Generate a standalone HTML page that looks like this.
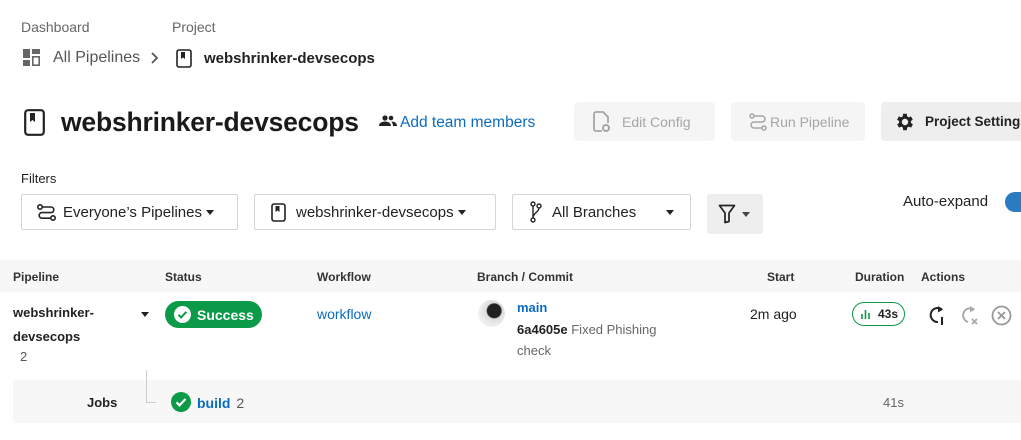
<!DOCTYPE html>
<html><head><meta charset="utf-8"><style>
body{margin:0;width:1021px;height:440px;overflow:hidden;background:#fff;font-family:"Liberation Sans",sans-serif;color:#222;position:relative}
.a{position:absolute;white-space:nowrap}
.btn{position:absolute;top:102px;height:39px;border-radius:4px;background:#f5f5f5;color:#a6a6a6;font-size:14px;display:flex;align-items:center}
.dd{position:absolute;top:194px;height:34px;border:1px solid #d6d6d6;border-radius:2px;font-size:15px;display:flex;align-items:center;color:#222}
.th{position:absolute;top:270px;font-size:12px;font-weight:bold;color:#333}
.caret{display:inline-block;width:0;height:0;border-left:4px solid transparent;border-right:4px solid transparent;border-top:5px solid #222}
.blue{color:#0b6bbf}
</style></head><body>
<div class="a" style="left:21px;top:19px;font-size:14px;color:#666">Dashboard</div>
<div class="a" style="left:172px;top:19px;font-size:14px;color:#666">Project</div>
<svg class="a" style="left:23px;top:49px" width="18" height="18" viewBox="0 0 18 18"><rect x="0" y="0" width="7" height="9" fill="#666"/><rect x="9" y="0" width="8" height="5" fill="#666"/><rect x="0" y="11" width="7" height="6" fill="#666"/><rect x="9.8" y="7.8" width="6.4" height="8.4" fill="none" stroke="#666" stroke-width="1.6"/></svg>
<div class="a" style="left:53px;top:49px;font-size:16px;color:#555">All Pipelines</div>
<svg class="a" style="left:150px;top:51px" width="10" height="14"><path d="M2 2l5 5-5 5" fill="none" stroke="#555" stroke-width="1.8"/></svg>
<svg class="a" style="left:176px;top:49px" width="16" height="19" viewBox="0 0 16 19"><rect x="1" y="1" width="14" height="17" rx="2" fill="none" stroke="#222" stroke-width="1.6"/><path d="M5 3v7l2-1.5 2 1.5V3z" fill="#222"/></svg>
<div class="a" style="left:204px;top:50px;font-size:15px;font-weight:bold">webshrinker-devsecops</div>

<svg class="a" style="left:24px;top:109px" width="21" height="27" viewBox="0 0 21 27"><rect x="1.2" y="1.2" width="18.6" height="24.6" rx="3" fill="none" stroke="#222" stroke-width="2.2"/><path d="M6 4v9l2.5-2 2.5 2V4z" fill="#222"/></svg>
<div class="a" style="left:61px;top:107px;font-size:26.5px;font-weight:bold;color:#1a1a1a;letter-spacing:-0.2px">webshrinker-devsecops</div>
<svg class="a" style="left:379px;top:115px" width="18" height="12" viewBox="0 0 18 12"><circle cx="6" cy="3" r="2.6" fill="#222"/><circle cx="12" cy="3" r="2.3" fill="#222"/><path d="M0 11c0-3 3-4.5 6-4.5s6 1.5 6 4.5z M12.5 6.5c3 0 5.5 1.5 5.5 4.5h-4c0-2-1-3.5-1.5-4.5z" fill="#222"/></svg>
<div class="a blue" style="left:400px;top:114px;font-size:15.5px">Add team members</div>

<div class="btn" style="left:574px;width:141px"><svg style="margin-left:19px" width="18" height="22" viewBox="0 0 18 22"><path d="M9 20H3a2 2 0 0 1-2-2V3a2 2 0 0 1 2-2h7l5 5v6" fill="none" stroke="#a6a6a6" stroke-width="1.8"/><circle cx="13" cy="17" r="3" fill="none" stroke="#a6a6a6" stroke-width="2"/></svg><span style="margin-left:11px">Edit Config</span></div>
<div class="btn" style="left:731px;width:134px"><svg style="margin-left:18px" width="18" height="18" viewBox="0 0 18 18"><circle cx="3" cy="3" r="2" fill="none" stroke="#a6a6a6" stroke-width="1.5"/><circle cx="15" cy="15" r="2" fill="none" stroke="#a6a6a6" stroke-width="1.5"/><path d="M5 3h8a3 3 0 0 1 0 6H5a3 3 0 0 0 0 6h8" fill="none" stroke="#a6a6a6" stroke-width="1.5"/></svg><span style="margin-left:3px">Run Pipeline</span></div>
<div class="btn" style="left:881px;width:160px;background:#eee;color:#222;font-weight:bold;font-size:13.5px"><svg style="margin-left:13px" width="22" height="22" viewBox="0 0 24 24"><path fill="#222" d="M19.4 13a7.5 7.5 0 0 0 0-2l2.1-1.6-2-3.5-2.5 1a7 7 0 0 0-1.7-1L15 3h-4l-.4 2.9a7 7 0 0 0-1.7 1l-2.5-1-2 3.5L6.6 11a7.5 7.5 0 0 0 0 2l-2.1 1.6 2 3.5 2.5-1a7 7 0 0 0 1.7 1L11 21h4l.4-2.9a7 7 0 0 0 1.7-1l2.5 1 2-3.5zM13 15.5a3.5 3.5 0 1 1 0-7 3.5 3.5 0 0 1 0 7z" transform="translate(-1 0)"/></svg><span style="margin-left:9px">Project Settings</span></div>

<div class="a" style="left:21px;top:171px;font-size:13px;color:#222">Filters</div>
<div class="dd" style="left:21px;width:215px"><svg style="margin-left:15px" width="19" height="17" viewBox="0 0 19 17"><circle cx="3" cy="3" r="2.2" fill="none" stroke="#222" stroke-width="1.6"/><circle cx="16" cy="14" r="2.2" fill="none" stroke="#222" stroke-width="1.6"/><path d="M5 3h9a2.8 2.8 0 0 1 0 5.6H5a2.8 2.8 0 0 0 0 5.6h9" fill="none" stroke="#222" stroke-width="1.6"/></svg><span style="margin-left:7px">Everyone’s Pipelines</span><span class="caret" style="margin-left:4px"></span></div>
<div class="dd" style="left:254px;width:240px"><svg style="margin-left:16px" width="15" height="19" viewBox="0 0 15 19"><rect x="1" y="1" width="13" height="17" rx="2" fill="none" stroke="#222" stroke-width="1.6"/><path d="M4.5 3v6l2-1.5 2 1.5V3z" fill="#222"/></svg><span style="margin-left:10px">webshrinker-devsecops</span><span class="caret" style="margin-left:4px"></span></div>
<div class="dd" style="left:512px;width:177px"><svg style="margin-left:17px" width="12" height="22" viewBox="0 0 12 22"><circle cx="3" cy="3" r="2" fill="none" stroke="#222" stroke-width="1.4"/><circle cx="9" cy="5" r="2" fill="none" stroke="#222" stroke-width="1.4"/><circle cx="3" cy="19" r="2" fill="none" stroke="#222" stroke-width="1.4"/><path d="M3 5v12M9 7c0 4-6 5-6 10" fill="none" stroke="#222" stroke-width="1.4"/></svg><span style="margin-left:10px">All Branches</span><span class="caret" style="margin-left:30px"></span></div>
<div class="a" style="left:707px;top:194px;width:56px;height:40px;background:#eee;border-radius:3px"><svg class="a" style="left:11px;top:10px" width="18" height="20" viewBox="0 0 18 20"><path d="M1.5 1.5h15L11 9v8.5l-4 1V9z" fill="none" stroke="#222" stroke-width="1.7" stroke-linejoin="round"/></svg><span class="caret a" style="left:35px;top:18px;border-top-color:#444"></span></div>
<div class="a" style="left:903px;top:193px;font-size:15px">Auto-expand</div>
<div class="a" style="left:1005px;top:192px;width:40px;height:20px;border-radius:10px;background:#2b7bc0"></div>

<div class="a" style="left:0;top:260px;width:1021px;height:32px;background:#f7f7f7"></div>
<div class="th" style="left:13px">Pipeline</div>
<div class="th" style="left:165px">Status</div>
<div class="th" style="left:317px">Workflow</div>
<div class="th" style="left:477px">Branch / Commit</div>
<div class="th" style="left:767px">Start</div>
<div class="th" style="left:855px">Duration</div>
<div class="th" style="left:921px">Actions</div>

<div class="a" style="left:13px;top:301px;font-size:13px;font-weight:bold;line-height:24px">webshrinker-<br>devsecops</div>
<div class="a" style="left:20px;top:349px;font-size:13px;color:#555">2</div>
<span class="caret a" style="left:141px;top:312px"></span>
<div class="a" style="left:165px;top:301px;width:97px;height:27px;border-radius:14px;background:#0b9b48;color:#fff;font-size:14px;font-weight:bold"><svg class="a" style="left:9px;top:5px" width="17" height="17" viewBox="0 0 17 17"><circle cx="8.5" cy="8.5" r="8.5" fill="#fff"/><path d="M4.5 8.8l2.6 2.6 5.3-5.6" fill="none" stroke="#0b9b48" stroke-width="2"/></svg><span class="a" style="left:32px;top:6px">Success</span></div>
<div class="a blue" style="left:317px;top:306px;font-size:14px">workflow</div>
<div class="a" style="left:478px;top:300px;width:27px;height:27px;border-radius:50%;background:radial-gradient(circle at 60% 40%,#222 30%,#ddd 35%,#f2f2f2 70%)"></div>
<div class="a blue" style="left:517px;top:300px;font-size:13px;font-weight:bold">main</div>
<div class="a" style="left:517px;top:322px;font-size:13px;color:#666"><b style="color:#222">6a4605e</b> Fixed Phishing</div>
<div class="a" style="left:517px;top:343px;font-size:13px;color:#666">check</div>
<div class="a" style="left:750px;top:306px;font-size:14px">2m ago</div>
<div class="a" style="left:852px;top:302px;width:51px;height:22px;border:1.5px solid #0b9b48;border-radius:12px"><svg class="a" style="left:8px;top:6px" width="9" height="10"><path d="M1 10V5M4.5 10V1M8 10V4" stroke="#0b9b48" stroke-width="1.6"/></svg><span class="a" style="left:25px;top:4px;font-size:12px;font-weight:bold">43s</span></div>
<svg class="a" style="left:928px;top:305px" width="20" height="22" viewBox="0 0 20 22"><path d="M14 4.5A7 7 0 1 0 10 17" fill="none" stroke="#222" stroke-width="2"/><path d="M10 1l5 3.5-5 3z" fill="#222"/><path d="M14 12v8" stroke="#222" stroke-width="2"/></svg>
<svg class="a" style="left:960px;top:305px" width="20" height="22" viewBox="0 0 20 22"><path d="M14 4.5A7 7 0 1 0 8 17" fill="none" stroke="#aaa" stroke-width="2"/><path d="M10 1l5 3.5-5 3z" fill="#aaa"/><path d="M12 14l5 5M17 14l-5 5" stroke="#aaa" stroke-width="1.8"/></svg>
<svg class="a" style="left:991px;top:305px" width="21" height="21" viewBox="0 0 21 21"><circle cx="10.5" cy="10.5" r="9" fill="none" stroke="#999" stroke-width="1.8"/><path d="M7 7l7 7M14 7l-7 7" stroke="#999" stroke-width="1.8"/></svg>

<div class="a" style="left:13px;top:380px;width:1008px;height:43px;background:#f7f7f7"></div>
<div class="a" style="left:146px;top:370px;width:1px;height:33px;background:#ccc"></div>
<div class="a" style="left:146px;top:402px;width:10px;height:1px;background:#ccc"></div>
<div class="a" style="left:87px;top:395px;font-size:13px;font-weight:bold">Jobs</div>
<svg class="a" style="left:171px;top:392px" width="20" height="20" viewBox="0 0 20 20"><circle cx="10" cy="10" r="10" fill="#0b9b48"/><path d="M5.5 10.3l3 3 6-6.3" fill="none" stroke="#fff" stroke-width="2.2"/></svg>
<div class="a" style="left:197px;top:395px;font-size:14px"><span class="blue" style="font-weight:bold">build</span> <span style="color:#555;margin-left:2px">2</span></div>
<div class="a" style="left:883px;top:395px;font-size:13px;color:#666">41s</div>
</body></html>
